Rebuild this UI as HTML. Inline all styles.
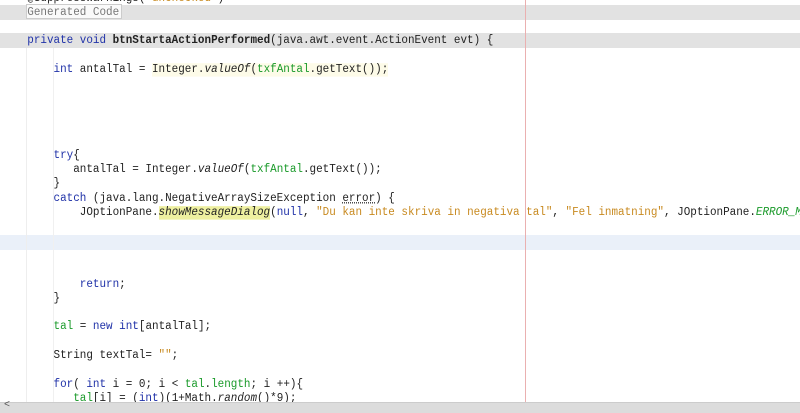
<!DOCTYPE html><html><head><style>
body{margin:0;width:800px;height:412px;overflow:hidden;background:#fff;position:relative;font-family:"Liberation Mono",monospace;font-size:10.95px;color:#222}
.l{position:absolute;left:1px;width:799px;height:14.3px;line-height:14.3px;white-space:pre;overflow:hidden;margin-top:1px}
.l>span.t{display:inline-block;transform:scaleY(1.12);transform-origin:50% 55%}
.k{color:#2032a8}.f{color:#1a9a2a}.s{color:#c88a20}.i{font-style:italic}.b{font-weight:bold}
.band{position:absolute;left:0;width:800px;background:#e2e2e2}
</style></head><body>
<div class="band" style="top:5px;height:15px"></div>
<div class="band" style="top:33px;height:15px"></div>
<div style="position:absolute;left:0;top:235px;width:800px;height:15px;background:#eaf0f9"></div>
<div style="position:absolute;left:26px;top:4px;width:96px;height:15px;background:#fafafa;border:1px solid #ccc;box-sizing:border-box"></div>
<div style="position:absolute;left:26px;top:48px;width:1px;height:355px;background:#eee"></div>
<div style="position:absolute;left:53px;top:48px;width:1px;height:355px;background:#f0f0f0"></div>
<div style="position:absolute;left:525px;top:0;width:1px;height:402px;background:#eab0b0"></div>
<div class="l" style="top:-9.5px"><span class="t">    @SuppressWarnings(<span class="s">"unchecked"</span>)</span></div>
<div class="l" style="top:4.8px;color:#777"><span class="t">    Generated Code</span></div>
<div class="l" style="top:33.4px"><span class="t">    <span class="k">private void</span> <span class="b">btnStartaActionPerformed</span>(java.awt.event.ActionEvent evt) {</span></div>
<div class="l" style="top:62px"><span class="t">        <span class="k">int</span> antalTal = <span style="background:#fdfbe8">Integer.<span class="i">valueOf</span>(<span class="f">txfAntal</span>.getText());</span></span></div>
<div class="l" style="top:147.8px"><span class="t">        <span class="k">try</span>{</span></div>
<div class="l" style="top:162.1px"><span class="t">           antalTal = Integer.<span class="i">valueOf</span>(<span class="f">txfAntal</span>.getText());</span></div>
<div class="l" style="top:176.4px"><span class="t">        }</span></div>
<div class="l" style="top:190.7px"><span class="t">        <span class="k">catch</span> (java.lang.NegativeArraySizeException <span style="text-decoration:underline dotted">error</span>) {</span></div>
<div class="l" style="top:205px"><span class="t">            JOptionPane.<span class="i" style="background:#eef0a0">showMessageDialog</span>(<span class="k">null</span>, <span class="s">"Du kan inte skriva in negativa tal"</span>, <span class="s">"Fel inmatning"</span>, JOptionPane.<span class="i f">ERROR_MESSAGE</span>);</span></div>
<div class="l" style="top:276.5px"><span class="t">            <span class="k">return</span>;</span></div>
<div class="l" style="top:290.8px"><span class="t">        }</span></div>
<div class="l" style="top:319.4px"><span class="t">        <span class="f">tal</span> = <span class="k">new int</span>[antalTal];</span></div>
<div class="l" style="top:348px"><span class="t">        String textTal= <span class="s">""</span>;</span></div>
<div class="l" style="top:376.6px"><span class="t">        <span class="k">for</span>( <span class="k">int</span> i = 0; i &lt; <span class="f">tal</span>.<span class="f">length</span>; i ++){</span></div>
<div class="l" style="top:390.9px"><span class="t">           <span class="f">tal</span>[i] = (<span class="k">int</span>)(1+Math.<span class="i">random</span>()*9);</span></div>
<div style="position:absolute;left:0;top:402px;width:800px;height:10px;background:#dcdcdc;border-top:1px solid #ccc"><span style="position:absolute;left:4px;top:-3px;font-size:10px;color:#555">&lt;</span></div>
</body></html>
